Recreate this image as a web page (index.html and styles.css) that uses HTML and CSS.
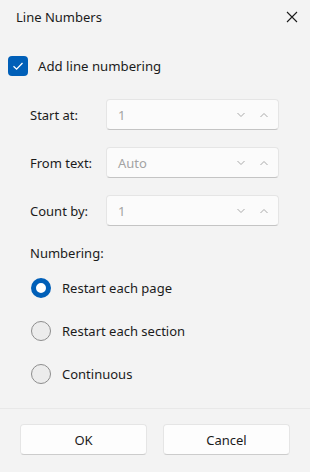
FILE: index.html
```html
<!DOCTYPE html>
<html lang="en">

<head>
    <meta charset="UTF-8">
    <meta name="viewport" content="width=device-width, initial-scale=1.0">
    <title>Line Numbers</title>
    <link rel="stylesheet" href="styles.css">
</head>

<body>
    <div class="dialog">
        <div class="titleBar">
            <span class="title">Line Numbers</span>
            <span class="closeBtn">
                <svg width="12" height="12" viewBox="0 0 12 12">
                    <path d="M1 1 L11 11 M11 1 L1 11" stroke="#1b1b1b" stroke-width="1.1" fill="none" />
                </svg>
            </span>
        </div>

        <div class="content">
            <label class="checkRow">
                <span class="checkBox">
                    <svg width="12" height="12" viewBox="0 0 12 12">
                        <path d="M1.5 6.3 L4.6 9.2 L10.5 3" stroke="#fff" stroke-width="1.3" fill="none" />
                    </svg>
                </span>
                Add line numbering
            </label>

            <div class="fields">
                <div class="fieldRow">
                    <span class="fieldLabel">Start at:</span>
                    <div class="spinBox">
                        <span class="spinValue">1</span>
                        <span class="chev">
                            <svg width="10" height="6" viewBox="0 0 10 6"><path d="M1.5 1 L5 4.5 L8.5 1" stroke="#aaaaaa" fill="none" /></svg>
                        </span>
                        <span class="chev">
                            <svg width="10" height="6" viewBox="0 0 10 6"><path d="M1.5 5 L5 1.5 L8.5 5" stroke="#aaaaaa" fill="none" /></svg>
                        </span>
                    </div>
                </div>
                <div class="fieldRow">
                    <span class="fieldLabel">From text:</span>
                    <div class="spinBox">
                        <span class="spinValue">Auto</span>
                        <span class="chev">
                            <svg width="10" height="6" viewBox="0 0 10 6"><path d="M1.5 1 L5 4.5 L8.5 1" stroke="#aaaaaa" fill="none" /></svg>
                        </span>
                        <span class="chev">
                            <svg width="10" height="6" viewBox="0 0 10 6"><path d="M1.5 5 L5 1.5 L8.5 5" stroke="#aaaaaa" fill="none" /></svg>
                        </span>
                    </div>
                </div>
                <div class="fieldRow">
                    <span class="fieldLabel">Count by:</span>
                    <div class="spinBox">
                        <span class="spinValue">1</span>
                        <span class="chev">
                            <svg width="10" height="6" viewBox="0 0 10 6"><path d="M1.5 1 L5 4.5 L8.5 1" stroke="#aaaaaa" fill="none" /></svg>
                        </span>
                        <span class="chev">
                            <svg width="10" height="6" viewBox="0 0 10 6"><path d="M1.5 5 L5 1.5 L8.5 5" stroke="#aaaaaa" fill="none" /></svg>
                        </span>
                    </div>
                </div>

                <div class="numbering">Numbering:</div>
                <div class="radioList">
                    <label class="radioRow"><span class="radio checked"></span>Restart each page</label>
                    <label class="radioRow"><span class="radio"></span>Restart each section</label>
                    <label class="radioRow"><span class="radio"></span>Continuous</label>
                </div>
            </div>
        </div>

        <div class="footer">
            <button type="button">OK</button>
            <button type="button">Cancel</button>
        </div>
    </div>
</body>

</html>
```

FILE: styles.css
```css
body {
    margin: 0;
    background: #f3f3f3;
    font-family: "Noto Sans", "Open Sans", sans-serif;
    font-size: 13px;
    color: #1b1b1b;
}
.dialog {
    height: 472px;
    display: flex;
    flex-direction: column;
}
.titleBar {
    height: 34px;
    display: flex;
    align-items: center;
    justify-content: space-between;
    padding: 0 16px;
}
.title {
    font-size: 13px;
}
.closeBtn {
    display: flex;
    margin-right: -4px;
}
.content {
    flex: 1;
    padding: 22px 0 0 8px;
}
.checkRow {
    display: flex;
    align-items: center;
    gap: 10px;
    height: 20px;
    font-size: 13.2px;
}
.checkBox {
    width: 20px;
    height: 20px;
    border-radius: 4px;
    background: #005fb8;
    display: flex;
    align-items: center;
    justify-content: center;
}
.fields {
    padding-left: 22px;
    margin-top: 23px;
}
.fieldRow {
    display: flex;
    align-items: center;
    height: 31px;
    margin-bottom: 17px;
}
.fieldLabel {
    width: 76px;
}
.spinBox {
    width: 173px;
    height: 31px;
    box-sizing: border-box;
    background: #fbfbfb;
    border: 1px solid #e5e5e5;
    border-bottom-color: #c4c4c4;
    border-radius: 4px;
    display: flex;
    align-items: center;
    padding: 0 3px 0 11px;
}
.spinValue {
    flex: 1;
    color: #a3a3a3;
}
.chev {
    width: 23px;
    display: flex;
    justify-content: center;
}
.numbering {
    height: 20px;
    line-height: 20px;
}
.radioList {
    margin-top: 15px;
    display: flex;
    flex-direction: column;
    gap: 23px;
}
.radioRow {
    display: flex;
    align-items: center;
    gap: 11px;
    height: 20px;
    padding-left: 1px;
}
.radio {
    width: 20px;
    height: 20px;
    box-sizing: border-box;
    border-radius: 50%;
    border: 1px solid #8d8d8d;
    background: #ececec;
}
.radio.checked {
    border: 5px solid #005fb8;
    background: #fff;
}
.footer {
    height: 64px;
    box-sizing: border-box;
    border-top: 1px solid #e8e8e8;
    display: flex;
    gap: 16px;
    padding: 15px 20px 0;
}
.footer button {
    width: 127px;
    height: 31px;
    background: #fdfdfd;
    border: 1px solid #e5e5e5;
    border-bottom-color: #cccccc;
    border-radius: 4px;
    font-family: inherit;
    font-size: 13px;
    color: #1b1b1b;
}
```
